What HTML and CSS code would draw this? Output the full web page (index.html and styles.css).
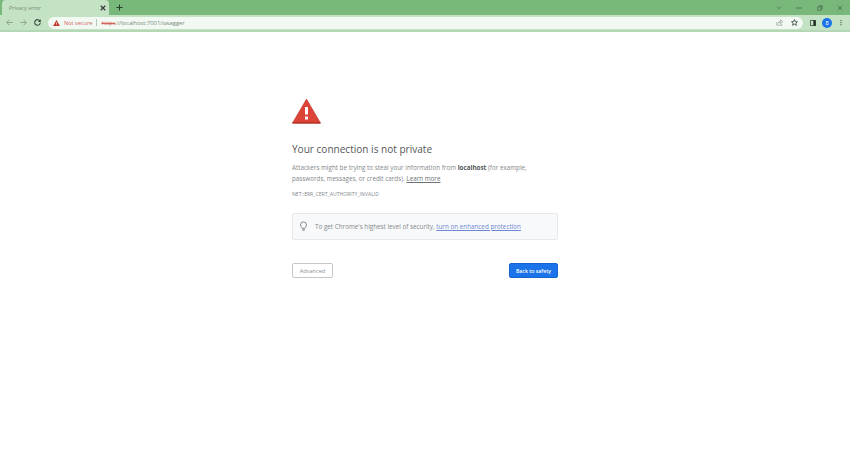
FILE: index.html
```html
<!DOCTYPE html>
<html lang="en">
<head>
    <meta charset="UTF-8">
    <title>Privacy error</title>
    <link rel="stylesheet" href="styles.css">
</head>
<body>
    <div class="tabstrip">
        <div class="tab">
            <span class="tab-title">Privacy error</span>
            <svg class="tab-close" width="6" height="6" viewBox="0 0 8 8"><path d="M1 1l6 6M7 1l-6 6" stroke="#333" stroke-width="1.5"/></svg>
        </div>
        <svg class="new-tab" width="7" height="7" viewBox="0 0 9 9"><path d="M4.5 0.5v8M0.5 4.5h8" stroke="#26402a" stroke-width="1.3"/></svg>
        <div class="win-controls">
            <svg width="6" height="4" viewBox="0 0 8 6"><path d="M1 1l3 3 3-3" fill="none" stroke="#4d6f52" stroke-width="1.2"/></svg>
            <svg width="6" height="2" viewBox="0 0 8 2"><path d="M0 1h8" stroke="#4d6f52" stroke-width="1.2"/></svg>
            <svg width="6" height="6" viewBox="0 0 8 8"><path d="M1 2.5h4.5V7H1zM3 2.5V1h4v4H5.5" fill="none" stroke="#4d6f52" stroke-width="1.1"/></svg>
            <svg width="6" height="6" viewBox="0 0 8 8"><path d="M1 1l6 6M7 1l-6 6" stroke="#4d6f52" stroke-width="1.2"/></svg>
        </div>
    </div>
    <div class="toolbar">
        <svg width="7" height="7" viewBox="0 0 9 9"><path d="M8.5 4.5H1M4.3 1L1 4.5 4.3 8" fill="none" stroke="#8ba08f" stroke-width="1.2"/></svg>
        <svg width="7" height="7" viewBox="0 0 9 9"><path d="M0.5 4.5H8M4.7 1L8 4.5 4.7 8" fill="none" stroke="#8ba08f" stroke-width="1.2"/></svg>
        <svg width="7" height="7" viewBox="0 0 9 9"><path d="M7.6 2.6A3.6 3.6 0 1 0 8.1 4.8M8 0.8v2.4H5.6" fill="none" stroke="#33493a" stroke-width="1.4"/></svg>
        <div class="omnibox">
            <svg class="warn-small" width="7" height="6" viewBox="0 0 9 8"><path d="M4.5 0L9 8H0z" fill="#c5352b"/><path d="M4.5 3v2.4M4.5 6v.9" stroke="#fff" stroke-width="0.9"/></svg>
            <span class="not-secure">Not secure</span>
            <span class="divider"></span>
            <span class="url"><span class="scheme">https</span>://localhost:7001/swagger</span>
            <svg class="share" width="7" height="7" viewBox="0 0 9 9"><path d="M1 4v4h6.5V6M3 5.5C3.5 3.5 5 2.7 6 2.7V1l2.5 2.4L6 5.6V4C4.8 4 3.8 4.5 3 5.5z" fill="none" stroke="#8c9a8f" stroke-width="0.9"/></svg>
            <svg class="star" width="7" height="7" viewBox="0 0 9 9"><path d="M4.5 0.8l1.1 2.5 2.7.3-2 1.8.6 2.7-2.4-1.4-2.4 1.4.6-2.7-2-1.8 2.7-.3z" fill="none" stroke="#33493a" stroke-width="1.1"/></svg>
        </div>
        <div class="toolbar-end">
            <svg width="6" height="6" viewBox="0 0 8 8"><path d="M0.5 0.5h7v7h-7z" fill="none" stroke="#1e2a20"/><path d="M4.5 0.5h3v7h-3z" fill="#1e2a20"/></svg>
            <span class="avatar">B</span>
            <svg width="2" height="7" viewBox="0 0 3 9"><circle cx="1.5" cy="1.2" r="1" fill="#4a5f4e"/><circle cx="1.5" cy="4.5" r="1" fill="#4a5f4e"/><circle cx="1.5" cy="7.8" r="1" fill="#4a5f4e"/></svg>
        </div>
    </div>

    <main class="interstitial">
        <svg class="warn-icon" width="29" height="26" viewBox="0 0 29 26">
            <path d="M14.5 1L28.5 25H0.5z" fill="#db4437" stroke="#b3291f" stroke-width="0.5"/>
            <path d="M0.5 25h28" stroke="#b3291f" stroke-width="1.2"/>
            <rect x="13" y="9" width="3" height="7.5" fill="#fff"/>
            <rect x="13" y="18.5" width="3" height="3" fill="#fff"/>
        </svg>
        <h1>Your connection is not private</h1>
        <p class="message">Attackers might be trying to steal your information from <strong>localhost</strong> (for example, passwords, messages, or credit cards). <a class="learn" href="#">Learn more</a></p>
        <p class="error-code">NET::ERR_CERT_AUTHORITY_INVALID</p>
        <div class="promo">
            <svg width="7" height="11" viewBox="0 0 9 13"><path d="M2.8 9C2.6 7.6 0.7 6.8 0.7 4.4a3.8 3.8 0 0 1 7.6 0C8.3 6.8 6.4 7.6 6.2 9z" fill="none" stroke="#70757a" stroke-width="1.1"/><path d="M3 11h3" stroke="#70757a" stroke-width="1.4"/></svg>
            <span>To get Chrome's highest level of security, <a href="#">turn on enhanced protection</a></span>
        </div>
        <div class="actions">
            <button class="btn-advanced">Advanced</button>
            <button class="btn-back">Back to safety</button>
        </div>
    </main>
</body>
</html>
```
FILE: styles.css
```css
body {
    margin: 0;
    height: 461px;
    overflow: hidden;
    background-color: #fff;
    font-family: "Open Sans", "Noto Sans", sans-serif;
}
.tabstrip {
    display: flex;
    align-items: flex-end;
    height: 15px;
    background-color: #78b87a;
}
.tab {
    display: flex;
    align-items: center;
    justify-content: space-between;
    box-sizing: border-box;
    width: 107px;
    height: 15px;
    margin-left: 2px;
    padding: 0 3px 0 7px;
    background-color: #c4e3c4;
    border-radius: 4px 4px 0 0;
}
.tab-title {
    font-size: 5.4px;
    color: #7a8a7d;
}
.new-tab {
    margin: 0 0 4px 7px;
}
.win-controls {
    display: flex;
    align-items: center;
    gap: 14.5px;
    margin-left: auto;
    height: 14px;
    padding-right: 7px;
}
.toolbar {
    display: flex;
    align-items: center;
    gap: 7px;
    box-sizing: border-box;
    height: 17px;
    padding-left: 6px;
    background-color: #c4e3c4;
    border-bottom: 2px solid #b4d8b5;
}
.omnibox {
    display: flex;
    align-items: center;
    box-sizing: border-box;
    flex: 1;
    height: 12px;
    padding: 0 5px;
    background-color: #f2f8f2;
    border-radius: 6px;
    font-size: 5.6px;
}
.not-secure {
    margin-left: 4px;
    color: #d2645c;
}
.divider {
    width: 1px;
    height: 7px;
    margin: 0 4px;
    background-color: #b9c4bb;
}
.url {
    font-size: 5.8px;
    color: #788a7c;
}
.scheme {
    color: #d2645c;
    text-decoration: line-through;
}
.share {
    margin-left: auto;
}
.star {
    margin-left: 8px;
}
.toolbar-end {
    display: flex;
    align-items: center;
    gap: 6px;
    padding-right: 8px;
}
.avatar {
    width: 10px;
    height: 10px;
    margin-right: 2px;
    border-radius: 50%;
    background-color: #1a73e8;
    color: #fff;
    font-size: 5px;
    line-height: 10px;
    text-align: center;
}
.interstitial {
    width: 266px;
    margin: 66px auto 0;
    color: #84888c;
}
.warn-icon {
    display: block;
}
h1 {
    margin: 18px 0 0;
    font-size: 10.05px;
    font-weight: 400;
    line-height: 14px;
    color: #54575a;
}
.message {
    margin: 6px 0 0;
    font-size: 6.3px;
    line-height: 11px;
}
.message strong {
    color: #54575a;
}
.learn {
    color: #6d7175;
}
.error-code {
    margin: 6px 0 0;
    font-size: 5.1px;
    line-height: 8px;
}
.promo {
    display: flex;
    align-items: center;
    gap: 8px;
    box-sizing: border-box;
    height: 27px;
    margin-top: 15px;
    padding-left: 7px;
    background-color: #f8f9fa;
    border: 1px solid #e6e8ea;
    border-radius: 2px;
    font-size: 6.3px;
}
.promo a {
    color: #7088d4;
}
.actions {
    display: flex;
    justify-content: space-between;
    margin-top: 23px;
}
button {
    height: 15px;
    padding: 0;
    border-radius: 2px;
    font-family: inherit;
    font-size: 5.6px;
}
.btn-advanced {
    width: 41px;
    background-color: #fff;
    border: 1px solid #c4c7ca;
    color: #8d9196;
}
.btn-back {
    width: 49px;
    background-color: #1a73e8;
    border: 1px solid #1565d0;
    color: #fff;
    font-size: 5.2px;
    font-weight: 600;
}
```
